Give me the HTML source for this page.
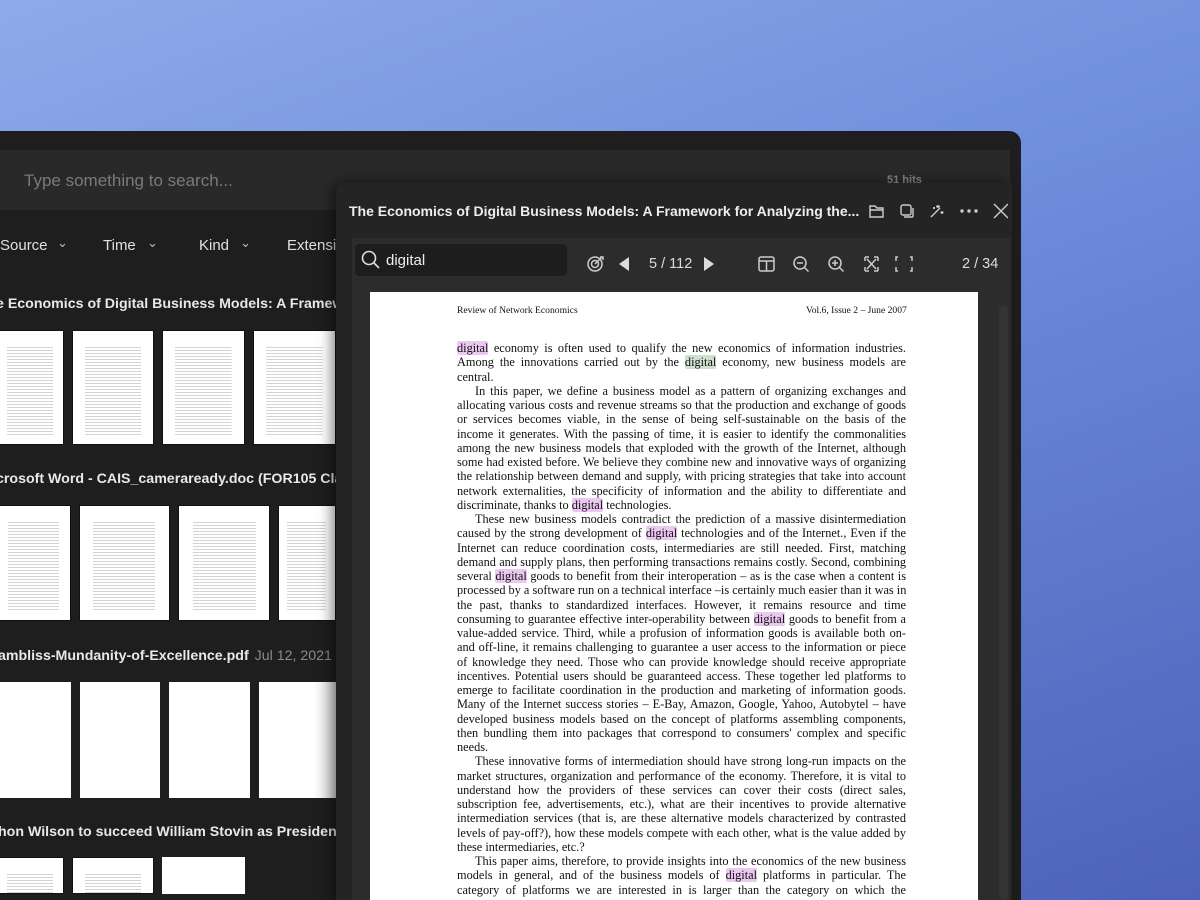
<!DOCTYPE html>
<html style="width:1200px;height:900px;overflow:hidden"><head><meta charset="utf-8"><style>
*{margin:0;padding:0;box-sizing:border-box}
body{width:1200px;height:900px;overflow:hidden;position:relative;font-family:"Liberation Sans",sans-serif;background:linear-gradient(160deg,#8eaae9 0%,#6f8edc 40%,#4d63bb 100%)}
.abs{position:absolute}
.win{left:0;top:131px;width:1021px;height:769px;background:#1e1e1e;border-top-right-radius:12px}
.sbar{left:0;top:150px;width:1010px;height:60px;background:#292929}
.t{color:#e8e8e8;font-weight:bold;font-size:14.2px;white-space:nowrap}
.th{position:absolute;background:#fff;border:1px solid #111;
background-image:repeating-linear-gradient(#fff 0 2px,#d4d4d4 2px 3px);background-size:70% 80%;background-repeat:no-repeat;background-position:center 14px}
.bl{position:absolute;background:#fff}
.panel{left:336px;top:183px;width:676px;height:717px;background:#242424;border-top-left-radius:10px;box-shadow:-4px 0 14px rgba(0,0,0,.5)}
.tool{left:352px;top:238px;width:658px;height:662px;background:#2c2c2c}
.page{left:370px;top:292px;width:608px;height:608px;background:#fff}
.tx{position:absolute;left:457px;width:449px;font-family:"Liberation Serif",serif;font-size:12.3px;color:#111;line-height:14.26px}
.l{text-align:justify;text-align-last:justify;white-space:nowrap;height:14.26px}
.l.e{text-align-last:left}
.l.i{padding-left:18px}
.p{background:#ebc8ef;border-radius:2px}
.g{background:#cfe0cf;border-radius:2px}
svg{position:absolute}
</style></head><body>
<div class="abs win"></div>
<div class="abs sbar"></div>
<div class="abs" style="left:24px;top:171px;color:#7a7a7a;font-size:17px">Type something to search...</div>
<div class="abs" style="left:887px;top:174px;color:#888;font-size:11px;font-weight:bold">51 hits</div>
<div class="abs" style="left:0;top:237px;color:#e0e0e0;font-size:15px;white-space:nowrap">Source</div>
<div class="abs" style="left:57px;top:235px;color:#bbb;font-size:13px">⌄</div>
<div class="abs" style="left:103px;top:237px;color:#e0e0e0;font-size:15px">Time</div>
<div class="abs" style="left:147px;top:235px;color:#bbb;font-size:13px">⌄</div>
<div class="abs" style="left:199px;top:237px;color:#e0e0e0;font-size:15px">Kind</div>
<div class="abs" style="left:240px;top:235px;color:#bbb;font-size:13px">⌄</div>
<div class="abs" style="left:287px;top:237px;color:#e0e0e0;font-size:15px">Extensi</div>
<div class="abs t" style="left:-4px;top:296px">e Economics of Digital Business Models: A Framew</div>
<div class="th" style="left:-4px;top:330px;width:68px;height:115px"></div>
<div class="th" style="left:72px;top:330px;width:82px;height:115px"></div>
<div class="th" style="left:162px;top:330px;width:83px;height:115px"></div>
<div class="th" style="left:253px;top:330px;width:83px;height:115px"></div>
<div class="abs t" style="left:-4px;top:471px">crosoft Word - CAIS_cameraready.doc (FOR105 Cla</div>
<div class="th" style="left:-4px;top:505px;width:75px;height:116px"></div>
<div class="th" style="left:79px;top:505px;width:91px;height:116px"></div>
<div class="th" style="left:178px;top:505px;width:92px;height:116px"></div>
<div class="th" style="left:278px;top:505px;width:58px;height:116px"></div>
<div class="abs t" style="left:-2px;top:648px">ambliss-Mundanity-of-Excellence.pdf <span style="color:#8a8a8a;font-weight:normal;margin-left:2px">Jul 12, 2021</span></div>
<div class="bl" style="left:-4px;top:682px;width:75px;height:116px"></div>
<div class="bl" style="left:80px;top:682px;width:80px;height:116px"></div>
<div class="bl" style="left:169px;top:682px;width:81px;height:116px"></div>
<div class="bl" style="left:259px;top:682px;width:77px;height:116px;background:linear-gradient(90deg,#fff 70%,#ddd)"></div>
<div class="abs t" style="left:-2px;top:824px">hon Wilson to succeed William Stovin as President</div>
<div class="th" style="left:-4px;top:857px;width:68px;height:37px"></div>
<div class="th" style="left:72px;top:857px;width:82px;height:37px"></div>
<div class="bl" style="left:162px;top:857px;width:83px;height:37px"></div>

<div class="abs panel"></div>
<div class="abs" style="left:349px;top:203px;color:#ededed;font-weight:bold;font-size:14px;white-space:nowrap">The Economics of Digital Business Models: A Framework for Analyzing the...</div>
<svg style="left:868px;top:202px" width="140" height="18" fill="none" stroke="#ccc" stroke-width="1.4">
<path d="M2 4h5l2 2h6v9H2z M2 8h13"/>
<rect x="33" y="3" width="10" height="10" rx="2"/><path d="M36 15h8a1 1 0 0 0 1-1V6"/>
<path d="M63 15l9-9 M70 3v3 M68 4.5h4 M74 9v3 M72.5 10.5h3 M66 5v2 M65 6h2"/>
<circle cx="94" cy="9" r="1" fill="#ccc"/><circle cx="101" cy="9" r="1" fill="#ccc"/><circle cx="108" cy="9" r="1" fill="#ccc"/>
<path d="M126 2l14 14 M140 2l-14 14" stroke-width="1.5"/>
</svg>
<div class="abs tool"></div>
<div class="abs" style="left:355px;top:244px;width:212px;height:32px;background:#1d1d1d;border-radius:4px"></div>
<svg style="left:361px;top:250px" width="20" height="20" fill="none" stroke="#ddd" stroke-width="1.6"><circle cx="8" cy="8" r="6.5"/><path d="M13 13l5 5"/></svg>
<div class="abs" style="left:386px;top:252px;color:#eee;font-size:15px">digital</div>
<svg style="left:585px;top:254px" width="340" height="22" fill="none" stroke="#ccc" stroke-width="1.5">
<circle cx="10" cy="10" r="7"/><circle cx="10" cy="10" r="3.5"/><path d="M10 10l7-7 M15 3h3v3"/>
<path d="M44 3v14l-10-7z" fill="#ddd" stroke="none"/>
<path d="M119 3v14l10-7z" fill="#ddd" stroke="none"/>
<rect x="174" y="3" width="15" height="14" rx="2"/><path d="M174 7h15 M181.5 7v10"/>
<circle cx="215" cy="9" r="6"/><path d="M212 9h6 M219.5 13.5l4 4"/>
<circle cx="250" cy="9" r="6"/><path d="M247 9h6 M250 6v6 M254.5 13.5l4 4"/>
<path d="M280 3h4 M280 3v4 M293 3h-4 M293 3v4 M280 17h4 M280 17v-4 M293 17h-4 M293 17v-4 M282 5l9 10 M291 5l-9 10"/>
<path d="M313 3h-2v4 M325 3h2v4 M313 17h-2v-4 M325 17h2v-4"/>
</svg>
<div class="abs" style="left:649px;top:256px;color:#ddd;font-size:14.5px">5 / 112</div>
<div class="abs" style="left:962px;top:256px;color:#ddd;font-size:14.5px">2 / 34</div>
<div class="abs" style="left:999px;top:305px;width:9px;height:595px;background:#333;border-radius:5px"></div>
<div class="abs page"></div>
<div class="abs" style="left:457px;top:305px;font-family:'Liberation Serif',serif;font-size:9.6px;color:#111">Review of Network Economics</div>
<div class="abs" style="left:806px;top:305px;font-family:'Liberation Serif',serif;font-size:9.6px;color:#111">Vol.6, Issue 2 – June 2007</div>
<div class="tx" style="top:341px">
<div class="l"><span class="p">digital</span> economy is often used to qualify the new economics of information industries.</div>
<div class="l">Among the innovations carried out by the <span class="g">digital</span> economy, new business models are</div>
<div class="l e">central.</div>
<div class="l i">In this paper, we define a business model as a pattern of organizing exchanges and</div>
<div class="l">allocating various costs and revenue streams so that the production and exchange of goods</div>
<div class="l">or services becomes viable, in the sense of being self-sustainable on the basis of the</div>
<div class="l">income it generates. With the passing of time, it is easier to identify the commonalities</div>
<div class="l">among the new business models that exploded with the growth of the Internet, although</div>
<div class="l">some had existed before. We believe they combine new and innovative ways of organizing</div>
<div class="l">the relationship between demand and supply, with pricing strategies that take into account</div>
<div class="l">network externalities, the specificity of information and the ability to differentiate and</div>
<div class="l e">discriminate, thanks to <span class="p">digital</span> technologies.</div>
<div class="l i">These new business models contradict the prediction of a massive disintermediation</div>
<div class="l">caused by the strong development of <span class="p">digital</span> technologies and of the Internet., Even if the</div>
<div class="l">Internet can reduce coordination costs, intermediaries are still needed. First, matching</div>
<div class="l">demand and supply plans, then performing transactions remains costly. Second, combining</div>
<div class="l">several <span class="p">digital</span> goods to benefit from their interoperation – as is the case when a content is</div>
<div class="l">processed by a software run on a technical interface –is certainly much easier than it was in</div>
<div class="l">the past, thanks to standardized interfaces. However, it remains resource and time</div>
<div class="l">consuming to guarantee effective inter-operability between <span class="p">digital</span> goods to benefit from a</div>
<div class="l">value-added service. Third, while a profusion of information goods is available both on-</div>
<div class="l">and off-line, it remains challenging to guarantee a user access to the information or piece</div>
<div class="l">of knowledge they need. Those who can provide knowledge should receive appropriate</div>
<div class="l">incentives. Potential users should be guaranteed access. These together led platforms to</div>
<div class="l">emerge to facilitate coordination in the production and marketing of information goods.</div>
<div class="l">Many of the Internet success stories – E-Bay, Amazon, Google, Yahoo, Autobytel – have</div>
<div class="l">developed business models based on the concept of platforms assembling components,</div>
<div class="l">then bundling them into packages that correspond to consumers' complex and specific</div>
<div class="l e">needs.</div>
<div class="l i">These innovative forms of intermediation should have strong long-run impacts on the</div>
<div class="l">market structures, organization and performance of the economy. Therefore, it is vital to</div>
<div class="l">understand how the providers of these services can cover their costs (direct sales,</div>
<div class="l">subscription fee, advertisements, etc.), what are their incentives to provide alternative</div>
<div class="l">intermediation services (that is, are these alternative models characterized by contrasted</div>
<div class="l">levels of pay-off?), how these models compete with each other, what is the value added by</div>
<div class="l e">these intermediaries, etc.?</div>
<div class="l i">This paper aims, therefore, to provide insights into the economics of the new business</div>
<div class="l">models in general, and of the business models of <span class="p">digital</span> platforms in particular. The</div>
<div class="l">category of platforms we are interested in is larger than the category on which the</div>
</div>
</body></html>
